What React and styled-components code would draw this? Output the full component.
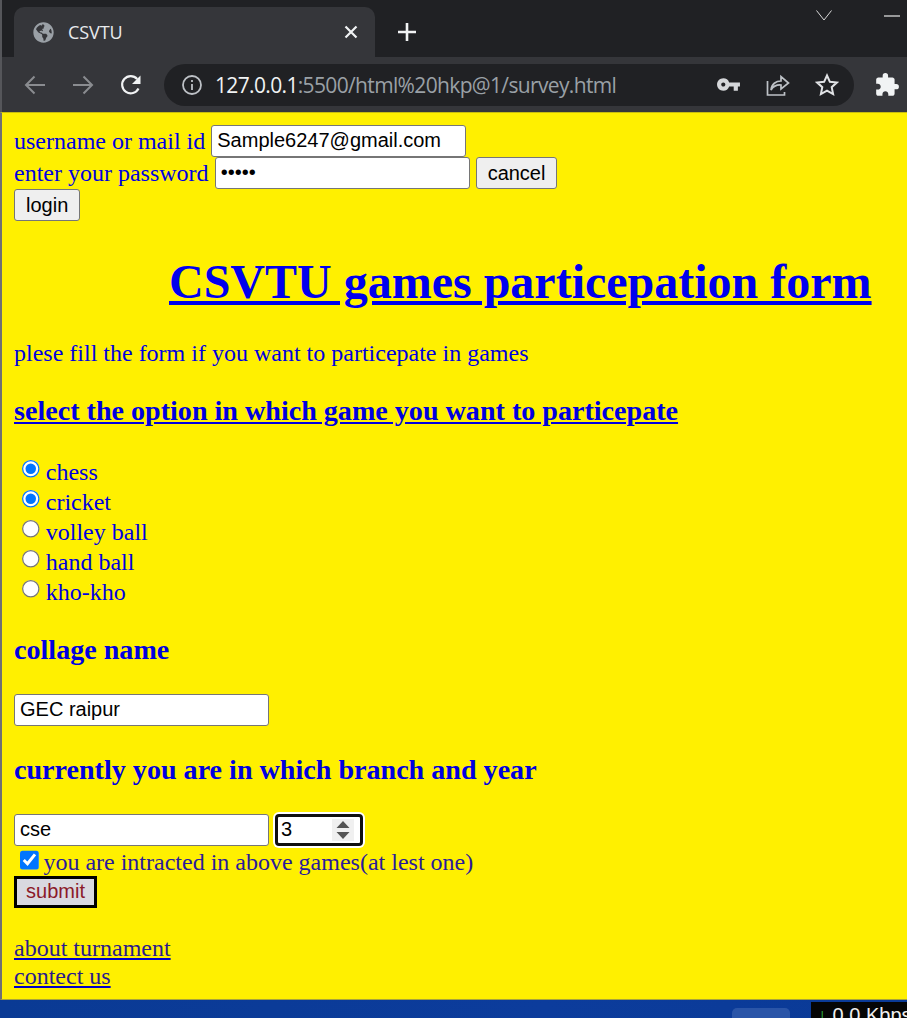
import React from 'react';
import styled, { createGlobalStyle } from 'styled-components';
import { MdVpnKey, MdExtension } from 'react-icons/md';
import { FaGlobeAmericas } from 'react-icons/fa';

const GlobalStyle = createGlobalStyle`
  html, body {
    margin: 0;
    padding: 0;
    background: #0b3a94;
    overflow: hidden;
  }
`;

const Screen = styled.div`
  width: 907px;
  height: 1018px;
  display: flex;
  flex-direction: column;
  overflow: hidden;
`;

const TabStrip = styled.div`
  height: 57px;
  background: #202124;
  border-left: 2px solid #55565a;
  display: flex;
  align-items: flex-end;
  padding-left: 12px;
  box-sizing: border-box;
`;

const Tab = styled.div`
  width: 361px;
  height: 50px;
  background: #35363a;
  border-radius: 10px 10px 0 0;
  color: #e8eaed;
  font: 18px "Open Sans", "Noto Sans", sans-serif;
  display: flex;
  align-items: center;
  padding: 0 17px 0 19px;
  box-sizing: border-box;
  svg { color: #9aa0a6; }
`;

const TabTitle = styled.span`
  margin-left: 14px;
  flex: 1;
  letter-spacing: -0.1px;
`;

const NewTab = styled.div`
  margin: 0 0 9px 22px;
  height: 32px;
  display: flex;
  align-items: center;
`;

const WindowControls = styled.div`
  margin-left: auto;
  align-self: flex-start;
  display: flex;
  align-items: center;
  gap: 52px;
  padding: 10px 7px 0 0;
`;

const Toolbar = styled.div`
  height: 55px;
  background: #35363a;
  border-left: 2px solid #55565a;
  display: flex;
  align-items: center;
  box-sizing: border-box;
  padding: 0 0 0 21px;
`;

const NavButton = styled.div`
  width: 24px;
  height: 24px;
  margin-right: ${p => p.$gap}px;
  display: flex;
  align-items: center;
  justify-content: center;
`;

const AddressBar = styled.div`
  width: 690px;
  height: 42px;
  flex: none;
  margin-left: 21px;
  background: #202124;
  border-radius: 21px;
  display: flex;
  align-items: center;
  box-sizing: border-box;
  padding: 0 15px 0 17px;
`;

const Url = styled.div`
  margin-left: 12px;
  flex: 1;
  font: 21px "Open Sans", "Noto Sans", sans-serif;
  letter-spacing: -0.65px;
  color: #9aa0a6;
  white-space: nowrap;
`;

const Host = styled.span`
  color: #f1f3f4;
`;

const BarIcons = styled.div`
  display: flex;
  align-items: center;
  gap: 25px;
`;

const ExtensionSlot = styled.div`
  margin-left: 20px;
  display: flex;
  color: #f1f3f4;
`;

const Page = styled.main`
  height: 888px;
  flex: none;
  background: #fff000;
  border-left: 2px solid #6f7073;
  border-top: 1px solid #c9bd10;
  border-bottom: 1px solid #a8a43a;
  box-sizing: border-box;
  padding: 12px 0 0 12px;
  color: #0000e0;
  font: 24px "Liberation Serif", "Times New Roman", serif;
`;

const Row = styled.div`
  display: flex;
  align-items: center;
  height: 32px;
  gap: ${p => p.$gap || 0}px;
  white-space: nowrap;
`;

const FieldLabel = styled.span`
  margin-right: 6px;
`;

const TextField = styled.input`
  width: ${p => p.$w}px;
  height: 32px;
  box-sizing: border-box;
  padding: 0 5px 1px;
  font: 20px "Liberation Sans", Arial, sans-serif;
  color: #000;
  background: #fff;
  border: 1px solid #767676;
  border-radius: 3px;
  outline: none;
`;

const PlainButton = styled.button`
  height: 32px;
  box-sizing: border-box;
  padding: 0 11px;
  margin-left: ${p => p.$left || 0}px;
  font: 20px "Liberation Sans", Arial, sans-serif;
  color: #000;
  background: #efefef;
  border: 1px solid #767676;
  border-radius: 3px;
`;

const Title = styled.h1`
  margin: 31px 0 0 155px;
  font: bold 48px/60px "Liberation Serif", "Times New Roman", serif;
  color: #0000ee;
  text-decoration: underline;
  white-space: nowrap;
`;

const Lead = styled.p`
  margin: 25px 0 0;
  line-height: 32px;
`;

const Heading = styled.h3`
  margin: ${p => p.$top}px 0 ${p => p.$bottom}px;
  font: bold 28.1px/32px "Liberation Serif", "Times New Roman", serif;
  color: #0000e0;
  text-decoration: ${p => (p.$underline ? 'underline' : 'none')};
  white-space: nowrap;
`;

const ChoiceRow = styled.label`
  display: flex;
  align-items: center;
  height: 30px;
  padding-left: 8px;
  line-height: 30px;
`;

const Radio = styled.input.attrs({ type: 'radio' })`
  zoom: 1.25;
  width: 14.4px;
  height: 14.4px;
  margin: 0 4.6px 5px 0;
`;

const SpinBox = styled.div`
  width: 88px;
  height: 32px;
  box-sizing: border-box;
  display: flex;
  align-items: center;
  padding-right: 6px;
  background: #fff;
  border: 3px solid #101010;
  border-radius: 4px;
  box-shadow: 0 0 0 2px #fff;
`;

const SpinInput = styled.input`
  width: 58px;
  min-width: 0;
  flex: 1;
  border: none;
  outline: none;
  padding: 0 0 1px 3px;
  background: transparent;
  font: 20px "Liberation Sans", Arial, sans-serif;
  color: #000;
`;

const Spinner = styled.div`
  width: 22px;
  height: 22px;
  flex: none;
  background: #f0f0f0;
  display: flex;
  align-items: center;
  justify-content: center;
`;

const Agree = styled.label`
  display: flex;
  align-items: center;
  height: 30px;
  box-sizing: border-box;
  padding: 2px 0 0 6px;
  color: #2a1a9c;
`;

const Check = styled.input.attrs({ type: 'checkbox' })`
  zoom: 1.25;
  width: 15.5px;
  height: 15.5px;
  margin: 0 3.2px 3px 0;
`;

const SubmitButton = styled.button`
  display: block;
  width: 83px;
  height: 32px;
  box-sizing: border-box;
  padding: 0 0 2px;
  font: 20px "Liberation Sans", Arial, sans-serif;
  color: #8b1a2a;
  background: #d9d9e0;
  border: 3px solid #000;
`;

const LinkList = styled.nav`
  margin-top: 26px;
  display: flex;
  flex-direction: column;
  align-items: flex-start;
`;

const TextLink = styled.a`
  height: 28px;
  line-height: 28px;
  color: #2a1a8c;
  text-decoration: underline;
  text-decoration-color: #0000c8;
`;

const Taskbar = styled.div`
  height: 18px;
  flex: none;
  background: linear-gradient(90deg, #0a3a94, #0c3c9c 60%, #0a3a96);
  display: flex;
  justify-content: flex-end;
  align-items: flex-start;
  overflow: hidden;
`;

const TrayButton = styled.div`
  width: 58px;
  height: 20px;
  margin: 8px 21px 0 0;
  border-radius: 5px 5px 0 0;
  background: #2a55a8;
`;

const NetSpeed = styled.div`
  width: 96px;
  height: 16px;
  margin-top: 2px;
  background: #050505;
  color: #f0f0f0;
  font: 20px/26px "Liberation Sans", Arial, sans-serif;
  padding-left: 6px;
  box-sizing: border-box;
  white-space: nowrap;
  overflow: hidden;
`;

const GreenArrow = styled.span`
  color: #35c24a;
`;

const BackIcon = () => (
  <svg width="24" height="24" viewBox="0 0 24 24" fill="none" stroke="#8a8c90" strokeWidth="2">
    <path d="M22 12H3M11.5 3.5L3 12l8.5 8.5" />
  </svg>
);

const ForwardIcon = () => (
  <svg width="24" height="24" viewBox="0 0 24 24" fill="none" stroke="#8a8c90" strokeWidth="2">
    <path d="M2 12h19M12.5 3.5L21 12l-8.5 8.5" />
  </svg>
);

const ReloadIcon = () => (
  <svg width="24" height="24" viewBox="0 0 24 24" fill="none">
    <path d="M19.5 15.5A8.6 8.6 0 1 1 18.2 6" stroke="#f1f3f4" strokeWidth="2.2" />
    <path d="M21.5 2.5v8.5H13z" fill="#f1f3f4" />
  </svg>
);

const InfoIcon = () => (
  <svg width="22" height="22" viewBox="0 0 22 22" fill="none" stroke="#bdc1c6" strokeWidth="1.8">
    <circle cx="11" cy="11" r="9" />
    <path d="M11 10v6M11 6v2" />
  </svg>
);

const ShareIcon = () => (
  <svg width="24" height="24" viewBox="0 0 24 24" fill="none" stroke="#bdc1c6" strokeWidth="1.7">
    <path d="M1.5 8v14h17v-3" />
    <path d="M5 17c.5-6 5-9 10-9V3.500L22.500 10 15 16v-4c-4-.3-7.500 1-10 5z" />
  </svg>
);

const StarIcon = () => (
  <svg width="24" height="24" viewBox="0 0 24 24" fill="none" stroke="#e0e2e5" strokeWidth="2">
    <path d="M12 2.500l2.900 6.300 6.900.8-5.100 4.600 1.400 6.800L12 17.600 5.900 21l1.400-6.800L2.200 9.600l6.900-.8z" />
  </svg>
);

const SpinArrows = () => (
  <svg width="14" height="18" viewBox="0 0 14 18" fill="#555">
    <path d="M7 0l6.500 7H.5zM7 18l6.500-7H.5z" />
  </svg>
);

const App = () => {
  return (
    <Screen>
      <GlobalStyle />
      <TabStrip>
        <Tab>
          <FaGlobeAmericas size={21} />
          <TabTitle>CSVTU</TabTitle>
          <svg width="14" height="14" viewBox="0 0 14 14" stroke="#f1f3f4" strokeWidth="2.2">
            <path d="M1.500 1.500l11 11M12.500 1.500l-11 11" />
          </svg>
        </Tab>
        <NewTab>
          <svg width="20" height="20" viewBox="0 0 20 20" stroke="#f1f3f4" strokeWidth="2.6">
            <path d="M10 1v18M1 10h18" />
          </svg>
        </NewTab>
        <WindowControls>
          <svg width="16" height="11" viewBox="0 0 16 11" fill="none" stroke="#d8d8d8" strokeWidth="1">
            <path d="M0.500 0.500L8 10l7.500-9.500" />
          </svg>
          <svg width="16" height="2" viewBox="0 0 16 2" stroke="#e8e8e8" strokeWidth="1.200">
            <path d="M0 1h16" />
          </svg>
        </WindowControls>
      </TabStrip>
      <Toolbar>
        <NavButton $gap={24}><BackIcon /></NavButton>
        <NavButton $gap={24}><ForwardIcon /></NavButton>
        <NavButton $gap={0}><ReloadIcon /></NavButton>
        <AddressBar>
          <InfoIcon />
          <Url><Host>127.0.0.1</Host>:5500/html%20hkp@1/survey.html</Url>
          <BarIcons>
            <MdVpnKey size={25} color="#d5d7da" />
            <ShareIcon />
            <StarIcon />
          </BarIcons>
        </AddressBar>
        <ExtensionSlot><MdExtension size={26} /></ExtensionSlot>
      </Toolbar>
      <Page>
        <Row>
          <FieldLabel>username or mail id</FieldLabel>
          <TextField $w={255} defaultValue="Sample6247@gmail.com" />
        </Row>
        <Row>
          <FieldLabel>enter your password</FieldLabel>
          <TextField $w={255} type="password" defaultValue="12345" />
          <PlainButton $left={6}>cancel</PlainButton>
        </Row>
        <Row>
          <PlainButton>login</PlainButton>
        </Row>
        <Title>CSVTU games particepation form</Title>
        <Lead>plese fill the form if you want to particepate in games</Lead>
        <Heading $underline $top={26} $bottom={30}>select the option in which game you want to particepate</Heading>
        <ChoiceRow><Radio name="chess" defaultChecked />chess</ChoiceRow>
        <ChoiceRow><Radio name="cricket" defaultChecked />cricket</ChoiceRow>
        <ChoiceRow><Radio name="volley" />volley ball</ChoiceRow>
        <ChoiceRow><Radio name="hand" />hand ball</ChoiceRow>
        <ChoiceRow><Radio name="kho" />kho-kho</ChoiceRow>
        <Heading $top={27} $bottom={28}>collage name</Heading>
        <Row>
          <TextField $w={255} defaultValue="GEC raipur" />
        </Row>
        <Heading $top={28} $bottom={28}>currently you are in which branch and year</Heading>
        <Row $gap={6}>
          <TextField $w={255} defaultValue="cse" />
          <SpinBox>
            <SpinInput type="text" defaultValue="3" />
            <Spinner><SpinArrows /></Spinner>
          </SpinBox>
        </Row>
        <Agree><Check defaultChecked />you are intracted in above games(at lest one)</Agree>
        <SubmitButton>submit</SubmitButton>
        <LinkList>
          <TextLink href="#">about turnament</TextLink>
          <TextLink href="#">contect us</TextLink>
        </LinkList>
      </Page>
      <Taskbar>
        <TrayButton />
        <NetSpeed><GreenArrow>↓</GreenArrow> 0.0 Kbps</NetSpeed>
      </Taskbar>
    </Screen>
  );
};

export default App;
